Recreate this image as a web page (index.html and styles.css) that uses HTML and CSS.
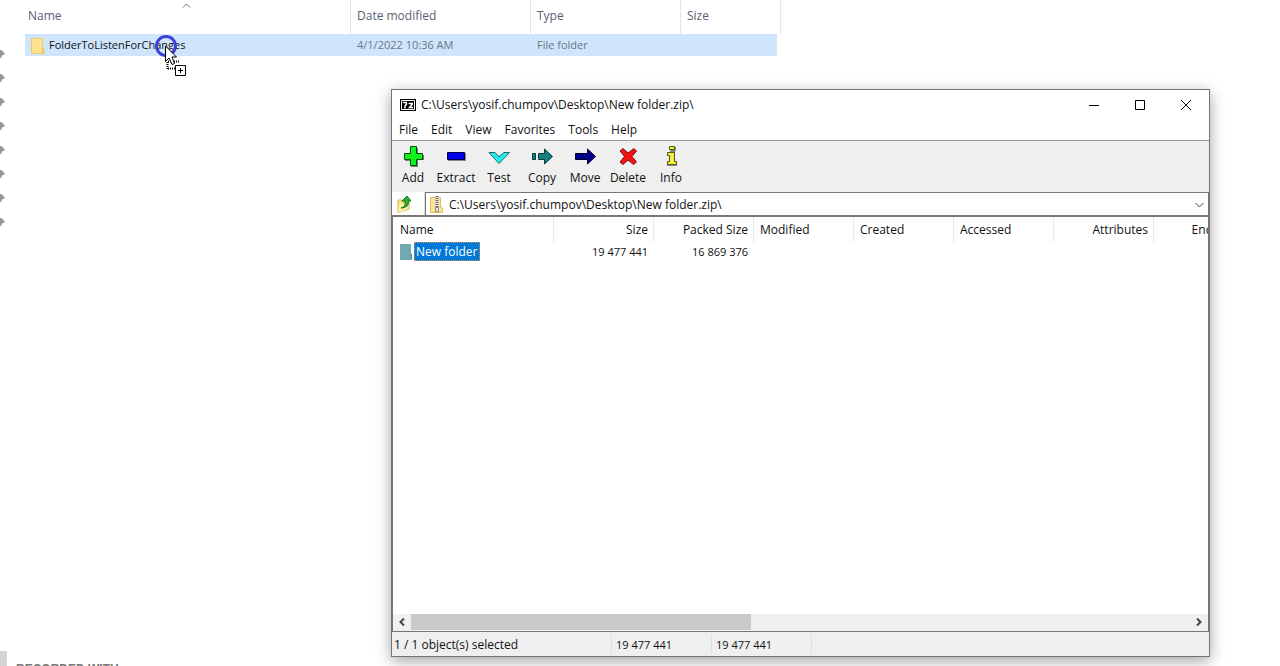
FILE: index.html
```html
<!DOCTYPE html>
<html lang="en">
<head>
<meta charset="utf-8">
<title>New folder.zip</title>
<link rel="stylesheet" href="styles.css">
</head>
<body>
<svg class="defs" aria-hidden="true">
  <symbol id="pin" viewBox="0 0 5 12"><path d="M0 2H1.500L4.500 5V7H2.500L1 10H0Z" fill="#999"/></symbol>
</svg>

<main class="explorer">
  <aside class="sidebar" aria-label="Quick access">
    <ul class="pins">
      <li><svg><use href="#pin"/></svg></li><li><svg><use href="#pin"/></svg></li>
      <li><svg><use href="#pin"/></svg></li><li><svg><use href="#pin"/></svg></li>
      <li><svg><use href="#pin"/></svg></li><li><svg><use href="#pin"/></svg></li>
      <li><svg><use href="#pin"/></svg></li><li><svg><use href="#pin"/></svg></li>
    </ul>
    <div class="sidebar-thumb"></div>
  </aside>
  <table class="files">
    <colgroup><col class="c-name"><col class="c-date"><col class="c-type"><col class="c-size"></colgroup>
    <thead>
      <tr>
        <th class="sorted" aria-sort="ascending">Name
          <svg class="sort" viewBox="0 0 9 5"><path d="M1 4.500L4.500 1L8 4.500" fill="none" stroke="#666"/></svg></th>
        <th>Date modified</th><th>Type</th><th>Size</th>
      </tr>
    </thead>
    <tbody>
      <tr>
        <td><span class="file"><svg class="folder" viewBox="0 0 14 17"><path d="M.5 1.500H11.500V11L13 12V16.500H.5Z" fill="#ffe28f" stroke="#edcb68"/><path d="M11.500 11V16" stroke="#dfb84f"/></svg>FolderToListenForChanges</span></td>
        <td>4/1/2022 10:36 AM</td><td>File folder</td><td></td>
      </tr>
    </tbody>
  </table>
</main>

<div class="watermark">RECORDED WITH</div>

<section class="window" aria-label="7-Zip">
  <header class="titlebar">
    <svg class="logo" viewBox="0 0 16 12"><path d="M0 0H16V12H0Z"/><path d="M1.500 1.500H14.500V10.500H1.500Z" fill="none" stroke="#fff"/><path d="M3 3.500H7M6.500 4V5L5 7V9.500M8.500 4.500H13M12.500 5L9.500 8.500H13" fill="none" stroke="#fff" stroke-width="1.500"/></svg>
    <h1>C:\Users\yosif.chumpov\Desktop\New folder.zip\</h1>
    <div class="controls">
      <button aria-label="Minimize"><svg viewBox="0 0 12 12"><path d="M1 6.500H11"/></svg></button>
      <button aria-label="Maximize"><svg viewBox="0 0 12 12"><path d="M1.500 1.500H10.500V10.500H1.500Z"/></svg></button>
      <button aria-label="Close"><svg viewBox="0 0 12 12"><path d="M1 1L11 11M11 1L1 11"/></svg></button>
    </div>
  </header>
  <nav class="menu">
    <button>File</button><button>Edit</button><button>View</button><button>Favorites</button><button>Tools</button><button>Help</button>
  </nav>
  <div class="toolbar">
    <button><svg viewBox="0 0 24 22"><path d="M10 3H17V10H23V15H17V22H10V16H4V10H10Z" fill="#777"/><path d="M9.500 1.500H15.500V8.500H21.500V14.500H15.500V20.500H9.500V14.500H3.500V8.500H9.500Z" fill="#0ef51b" stroke="#064d0a"/></svg>Add</button>
    <button><svg viewBox="0 0 24 22"><path d="M4 8H22V16H4Z" fill="#888"/><path d="M3.500 7.500H20.500V14.500H3.500Z" fill="#0000e8" stroke="#000050"/></svg>Extract</button>
    <button><svg viewBox="0 0 24 22"><path d="M2 7.500H8L12 12L17 7.500H22.500L12 18.500Z" fill="#21eef0" stroke="#126670"/></svg>Test</button>
    <button><svg viewBox="0 0 24 22"><path d="M2.500 8.500H5.500V14.500H2.500ZM8.500 8.500H14.500V4L22.500 11.500L14.500 19V14.500H8.500Z" fill="#148080" stroke="#073838"/></svg>Copy</button>
    <button><svg viewBox="0 0 24 22"><path d="M2.500 8.500H14.500V4L22.500 11.500L14.500 19V14.500H2.500Z" fill="#00008b" stroke="#000028"/></svg>Move</button>
    <button><svg viewBox="0 0 24 22"><path d="M4 6L7 3.500L12 8L18 3.500L20.500 6L16 11.500L20.500 17L17.500 19.500L12 15L7 19.500L4 17L8.500 11.500Z" fill="#f01414" stroke="#7b1111"/></svg>Delete</button>
    <button><svg viewBox="0 0 24 22"><path d="M11 2H17V6H16V18H18V21H8V19H11V11H8V8H11Z" fill="#888"/><path d="M10.500 1.500H15.500V4.500H10.500ZM8.500 7.500H15.500V16.500H17.500V19.500H8.500V16.500H10.500V10.500H8.500Z" fill="#f2f244" stroke="#55540d"/></svg>Info</button>
  </div>
  <div class="address">
    <button class="up" aria-label="Up one level"><svg viewBox="0 0 16 18"><path d="M1 5H5L6 7H12V14L3 17H1Z" fill="#ffe58a" stroke="#d5b64c"/><path d="M3 9H9L12 13L4 17L1 16Z" fill="#fff3a9"/><path d="M4 13Q9 12 8 6H5L10 1L14 6H11.500Q12 13 4 13Z" fill="#35ad35" stroke="#167917"/></svg></button>
    <div class="combo">
      <svg class="zip" viewBox="0 0 13 17"><path d="M.5 1.500H10.500V11L12.500 12V16.500H.5Z" fill="#ffe28f" stroke="#e2bd58"/><path d="M5 0H9V16H5Z" fill="#ddd"/><path d="M7 0V12" stroke="#777" stroke-width="3" stroke-dasharray="1 1"/><path d="M5.500 11.500H8.500V15.500H5.500Z" fill="#eee" stroke="#888"/></svg>
      <select aria-label="Path"><option>C:\Users\yosif.chumpov\Desktop\New folder.zip\</option></select>
      <svg class="chev" viewBox="0 0 9 6"><path d="M.5 1L4.500 5L8.500 1" fill="none" stroke="#444"/></svg>
    </div>
  </div>
  <div class="list">
    <table class="archive">
      <colgroup><col class="a-name"><col><col><col><col><col><col><col></colgroup>
      <thead><tr><th>Name</th><th class="num">Size</th><th class="num">Packed Size</th><th>Modified</th><th>Created</th><th>Accessed</th><th class="num">Attributes</th><th class="num">Encrypted</th></tr></thead>
      <tbody><tr>
        <td><span class="entry"><svg viewBox="0 0 13 17"><path d="M0 1H11V10L12 11V17H0Z" fill="#71a9b0"/><path d="M11.500 11V16" stroke="#568a83"/></svg><span class="picked">New folder</span></span></td>
        <td class="num">19 477 441</td><td class="num">16 869 376</td><td></td><td></td><td></td><td></td><td></td>
      </tr></tbody>
    </table>
  </div>
  <div class="scrollbar">
    <button aria-label="Scroll left"><svg viewBox="0 0 6 8"><path d="M5 .5L1.500 4L5 7.500"/></svg></button>
    <div class="track"><div class="thumb"></div></div>
    <button aria-label="Scroll right"><svg viewBox="0 0 6 8"><path d="M1 .5L4.500 4L1 7.500"/></svg></button>
  </div>
  <footer class="status"><span class="wide">1 / 1 object(s) selected</span><span class="count">19 477 441</span><span class="count">19 477 441</span></footer>
</section>

<svg class="cursor" viewBox="0 0 34 44" aria-hidden="true">
  <circle cx="12" cy="12" r="9.500" fill="none" stroke="#3f3fd6" stroke-width="3"/>
  <path d="M13.500 30.500V27.500H25.500V34.500H13.500Z" fill="#fff" stroke="#fff"/>
  <path d="M13.500 28V35M14 27.500H26M14 34.500H22" fill="none" stroke="#000" stroke-width="2" stroke-dasharray="1 1"/>
  <path d="M11.500 12V27.500L15 24L18 30.500L20.500 29.500L18 23H22.500Z" fill="#fff" stroke="#000"/>
  <path d="M21.500 31.500H31.500V41.500H21.500Z" fill="#fff" stroke="#000"/><path d="M24 36.500H29M26.500 34V39" stroke="#000"/>
</svg>
</body>
</html>
```
FILE: styles.css
```css
* { box-sizing: border-box; }
body { margin: 0; height: 100vh; overflow: hidden; position: relative; background: #fff; color: #111; font: 12px/16px "Open Sans", "Noto Sans", sans-serif; }
button, select { font: inherit; color: inherit; border: 0; background: none; padding: 0; margin: 0; }
svg { display: block; }
.defs { position: absolute; width: 0; height: 0; }
table { border-collapse: separate; border-spacing: 0; table-layout: fixed; }
th, td { font-weight: normal; text-align: left; white-space: nowrap; }

.explorer { display: flex; height: 100%; }
.sidebar { width: 25px; display: flex; flex-direction: column; justify-content: space-between; }
.pins { list-style: none; margin: 0; padding: 48px 0 0; }
.pins li { height: 24px; }
.pins svg { width: 5px; height: 12px; }
.sidebar-thumb { width: 7px; height: 15px; background: #d4d4d4; }
.files { width: 756px; align-self: flex-start; color: #6b7786; }
.c-name { width: 326px; }
.c-date { width: 180px; }
.c-type { width: 150px; }
.files th { height: 34px; padding: 0 6px 2px; border-right: 1px solid #e5e5e5; color: #566270; }
.files th:first-child { padding-left: 3px; }
.files td { height: 22px; padding: 0 6px; background: #cfe5fc; font-size: 11px; }
.files td:last-child { border-right: 4px solid #fff; }
.sorted { position: relative; }
.sort { position: absolute; left: 157px; top: 3px; width: 9px; height: 5px; }
.file { display: flex; align-items: center; gap: 4px; color: #111; }
.folder { width: 14px; height: 17px; }

.watermark { position: absolute; left: 16px; bottom: -11px; font: bold 12px/16px "Liberation Sans", sans-serif; color: #777; }

.window { position: absolute; left: 391px; right: 70px; top: 89px; bottom: 9px; display: flex; flex-direction: column; background: #fff; border: 1px solid #747474; box-shadow: 0 4px 14px rgba(0, 0, 0, .36); }
.titlebar { display: flex; align-items: center; height: 29px; padding-left: 8px; gap: 5px; }
.logo { width: 16px; height: 12px; }
h1 { margin: 0; flex: 1; font-size: 12px; font-weight: normal; }
.controls { display: flex; align-self: stretch; }
.controls button { width: 46px; display: grid; place-items: center; }
.controls svg { width: 12px; height: 12px; fill: none; stroke: #000; }
.menu { display: flex; align-items: center; gap: 13px; height: 22px; padding-left: 7px; border-bottom: 1px solid #999; }
.toolbar { display: flex; height: 51px; background: #efefef; }
.toolbar button { width: 43px; display: flex; flex-direction: column; align-items: center; padding: 4px 1px 0 0; gap: 3px; }
.toolbar svg { width: 24px; height: 22px; }
.address { display: flex; height: 25px; background: #fff; border-bottom: 2px solid #777; }
.up { width: 33px; display: grid; place-items: center start; padding-left: 5px; border-right: 1px solid #ddd; }
.up svg { width: 16px; height: 18px; }
.combo { flex: 1; display: flex; align-items: center; gap: 6px; padding: 1px 4px 0; border: solid #777; border-width: 1px 1px 0; }
.zip { width: 13px; height: 17px; }
.combo select { flex: 1; appearance: none; }
.chev { width: 9px; height: 6px; }
.list { flex: 1; overflow: hidden; border: solid #777; border-width: 0 1px; }
.archive { width: 861px; }
.a-name { width: 161px; }
.archive th { height: 25px; padding: 0 5px 0 6px; border-right: 1px solid #e8e8e8; }
.archive th:first-child, .archive td:first-child { padding-left: 7px; }
.archive td { height: 19px; padding: 0 6px; }
.archive .num { text-align: right; }
.archive td.num, .status .count { font-size: 11px; }
.entry { display: flex; align-items: center; gap: 1px; }
.entry svg { width: 13px; height: 17px; }
.picked { height: 19px; padding: 0 2px 0 1px; line-height: 17px; color: #fff; background: #0078d7; border: 1px dotted #d9944f; }
.scrollbar { display: flex; height: 18px; padding-bottom: 1px; background: #f0f0f0; border: solid #777; border-width: 0 1px 1px; }
.scrollbar button { width: 18px; display: grid; place-items: center; }
.scrollbar svg { width: 6px; height: 8px; fill: none; stroke: #444; stroke-width: 2; }
.track { flex: 1; }
.thumb { width: 340px; height: 100%; background: #cacaca; }
.status { display: flex; height: 24px; padding: 2px 0; background: #efefef; }
.status span { width: 100px; padding: 3px 4px 0; border-right: 1px solid #ddd; }
.status .wide { width: 220px; padding-left: 2px; }
.cursor { position: absolute; left: 154px; top: 34px; width: 34px; height: 44px; }
```
